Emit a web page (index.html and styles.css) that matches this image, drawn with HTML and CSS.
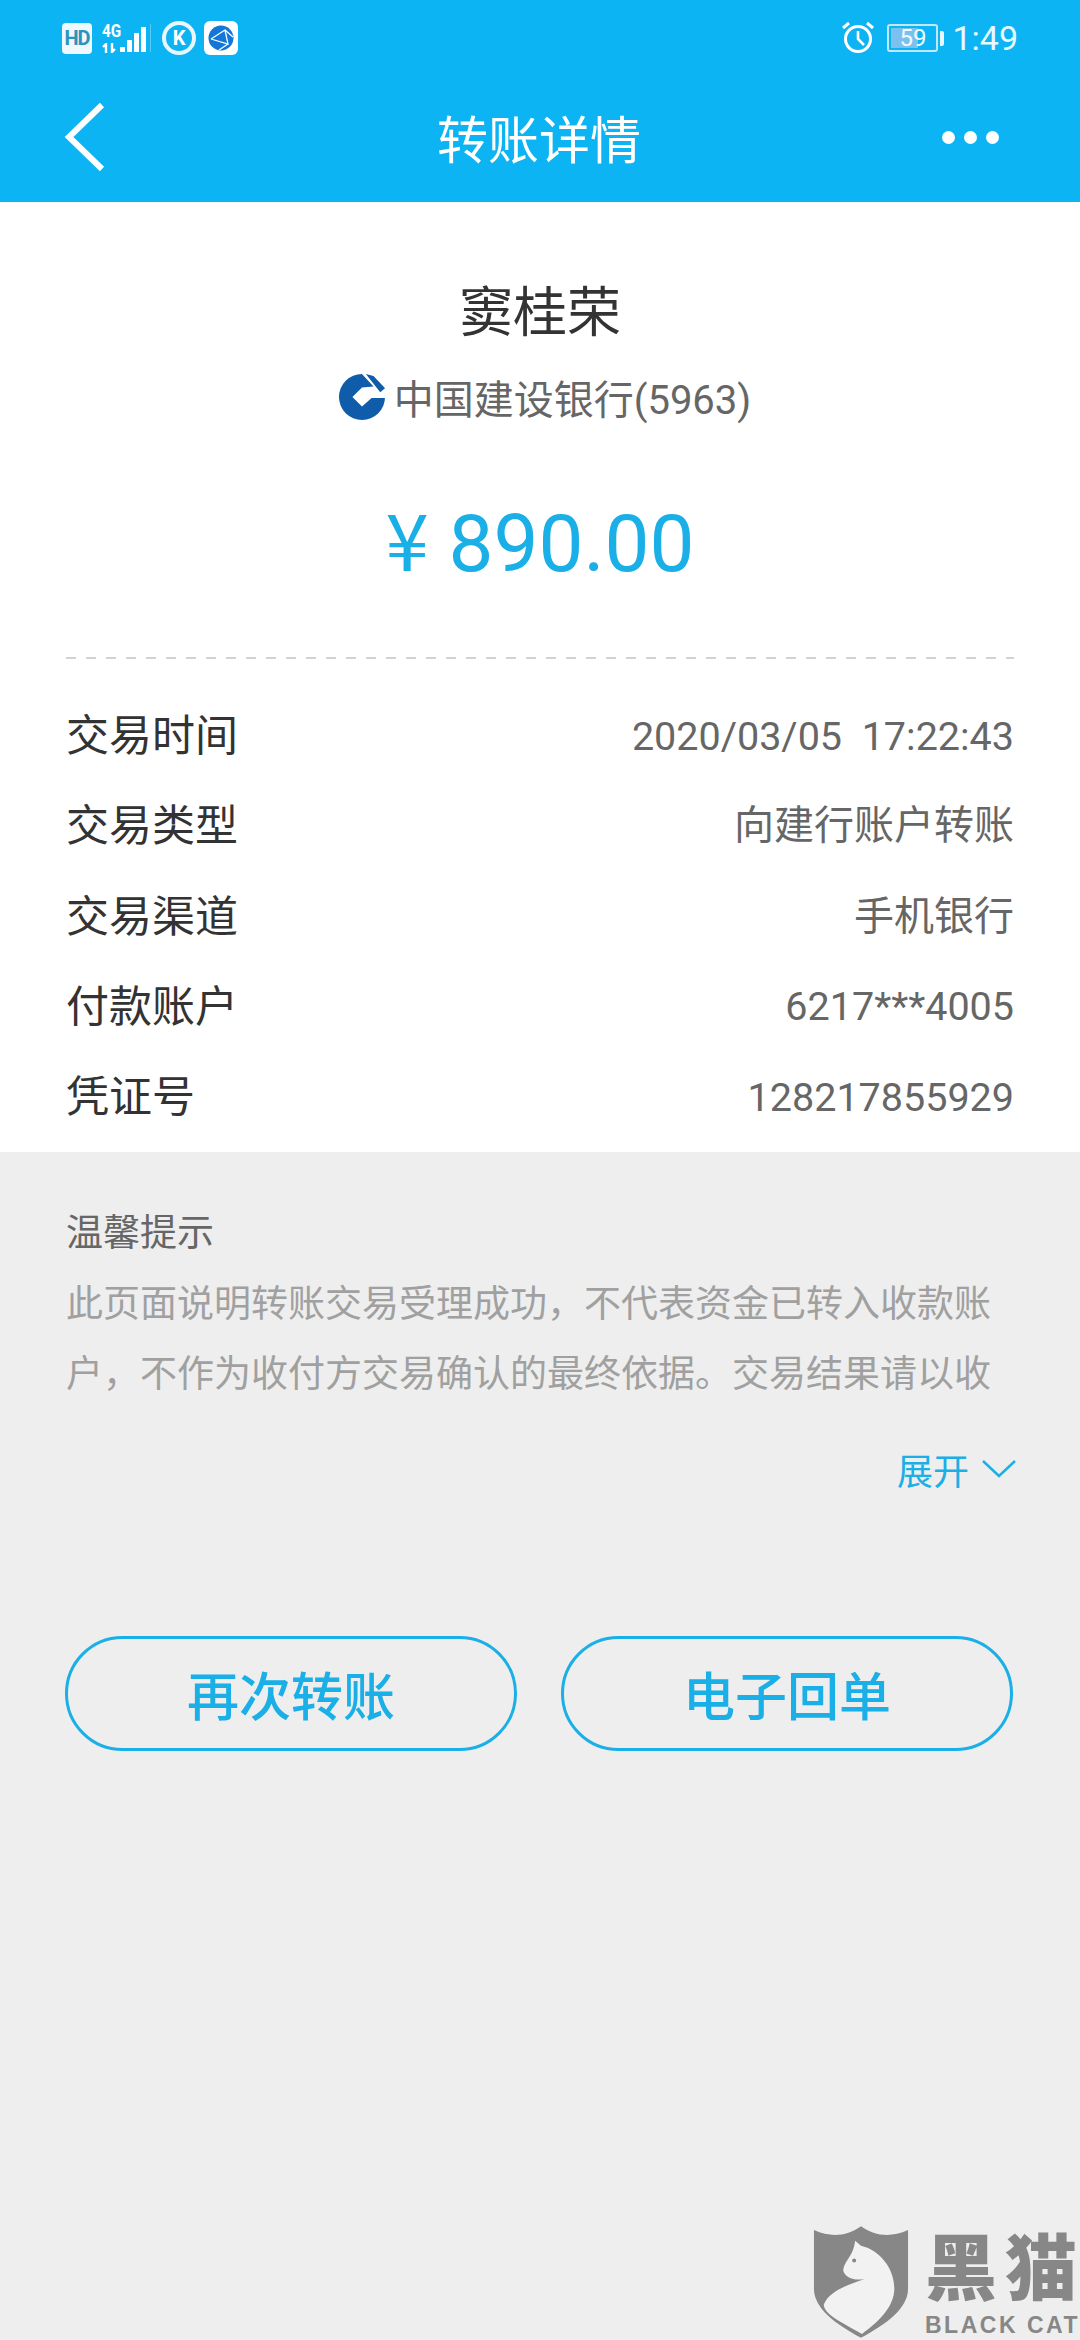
FILE: index.html
```html
<!DOCTYPE html>
<html lang="zh-CN">
<head>
  <meta charset="UTF-8" />
  <meta name="viewport" content="width=device-width, initial-scale=1.0"/>
  <title>转账详情</title>
  <link rel="stylesheet" href="styles.css">
</head>
<body>

  <header class="top">
    <div class="status">
      <div class="status-left">
        <span class="hd">HD</span>
        <div class="net">
          <span class="net-label">4G</span>
          <svg class="net-arrows" width="18" height="10" viewBox="0 0 18 10">
            <path d="M4 10V1L1 4M10 0v9l3-3" fill="none" stroke="#fff" stroke-width="2.400"/>
          </svg>
        </div>
        <div class="bars">
          <i class="b1"></i><i class="b2"></i><i class="b3"></i><i class="b4"></i>
        </div>
        <span class="k-icon">K</span>
        <span class="app-icon">
          <svg width="26" height="26" viewBox="0 0 26 26">
            <circle cx="13" cy="13" r="12.500" fill="#1277d8"/>
            <path d="M3 14L17 5L20 19L3 14M17 5L25 12M20 19L11 25" fill="none" stroke="#fff" stroke-width="1.300"/>
          </svg>
        </span>
      </div>
      <div class="status-right">
        <svg width="36" height="34" viewBox="0 0 36 34">
          <circle cx="18" cy="19" r="12.500" fill="none" stroke="#fff" stroke-width="3"/>
          <path d="M18 11v8l6 6" fill="none" stroke="#fff" stroke-width="2.600"/>
          <path d="M3 8l6-5M33 8l-6-5" fill="none" stroke="#fff" stroke-width="3"/>
        </svg>
        <div class="battery">
          <div class="battery-body"><span class="battery-fill"></span><span class="battery-num">59</span></div>
          <span class="battery-tip"></span>
        </div>
        <span class="clock">1:49</span>
      </div>
    </div>
    <nav class="nav">
      <svg class="back" width="44" height="72" viewBox="0 0 44 72">
        <path d="M38 4L5 36L38 68" fill="none" stroke="#fff" stroke-width="6"/>
      </svg>
      <h1>转账详情</h1>
      <div class="more"><i></i><i></i><i></i></div>
    </nav>
  </header>

  <section class="card">
    <div class="payee">窦桂荣</div>
    <div class="bank">
      <svg width="48" height="48" viewBox="0 0 50 50">
        <circle cx="25" cy="25" r="24" fill="#0f5cab"/>
        <path d="M25 15L15 25L25 35L35 26H52V0H24L37 14Z" fill="#fff"/>
        <path d="M29 1L37 3L49 16L44 20Z" fill="#0f5cab"/>
      </svg>
      <span>中国建设银行(5963)</span>
    </div>
    <div class="amount"><span class="yen">¥</span> 890.00</div>
    <div class="dash"></div>
    <div class="rows">
      <div class="row"><span>交易时间</span><b class="num">2020/03/05&nbsp; 17:22:43</b></div>
      <div class="row"><span>交易类型</span><b>向建行账户转账</b></div>
      <div class="row"><span>交易渠道</span><b>手机银行</b></div>
      <div class="row"><span>付款账户</span><b class="num">6217***4005</b></div>
      <div class="row"><span>凭证号</span><b class="num">128217855929</b></div>
    </div>
  </section>

  <section class="tips">
    <h2>温馨提示</h2>
    <p>此页面说明转账交易受理成功，不代表资金已转入收款账<br>户，不作为收付方交易确认的最终依据。交易结果请以收</p>
    <div class="expand">
      <span>展开</span>
      <svg width="36" height="20" viewBox="0 0 36 20">
        <path d="M2 2L18 17L34 2" fill="none" stroke="#1aafe6" stroke-width="2.400"/>
      </svg>
    </div>
  </section>

  <div class="actions">
    <button class="pill">再次转账</button>
    <button class="pill">电子回单</button>
  </div>

  <!-- watermark -->
  <div class="mark">
    <svg width="98" height="114" viewBox="0 0 100 114">
      <path d="M2 4C20 12 36 10 50 0C64 10 80 12 98 4V64C98 84 76 100 50 114C24 100 2 84 2 64Z" fill="#878787"/>
      <path d="M44 15L50 20C68 24 84 42 84 64C84 82 68 98 51 110C30 98 12 90 12 80C18 66 36 60 54 54C42 56 34 52 32 46C32 36 42 32 44 15Z" fill="#f2f2f2"/>
      <circle cx="43" cy="35" r="2" fill="#878787"/>
    </svg>
    <div class="mark-text">
      <div class="mark-cn"><span>黑</span><span>猫</span></div>
      <span class="mark-en">BLACK CAT</span>
    </div>
  </div>

</body>
</html>
```

FILE: styles.css
```css
/* Reset and Base */
* {
  box-sizing: border-box;
  margin: 0;
  padding: 0;
}

body {
  font-family: Roboto, "Noto Sans CJK SC", sans-serif;
  background: #eeeeee;
  width: 1080px;
  height: 2340px;
  position: relative;
  overflow: hidden;
}

/* Status bar and title */
.top {
  background: #0db4f4;
  height: 202px;
  color: #fff;
}

.status {
  display: flex;
  justify-content: space-between;
  align-items: center;
  height: 76px;
  padding: 0 62px;
}

.status-left, .status-right {
  display: flex;
  align-items: center;
}

.hd {
  width: 30px;
  height: 31px;
  border-radius: 4px;
  background: #eef9fe;
  color: #2b93bd;
  font-size: 20px;
  font-weight: 700;
  line-height: 31px;
  text-align: center;
  letter-spacing: -1px;
}

.net {
  display: flex;
  flex-direction: column;
  align-items: flex-start;
  margin-left: 10px;
  width: 18px;
}

.net-label {
  font-size: 18px;
  font-weight: 700;
  line-height: 16px;
  transform: scaleX(0.85);
  transform-origin: left;
}

.net-arrows {
  margin-top: 4px;
}

.bars {
  display: flex;
  align-items: flex-end;
  gap: 2px;
  height: 28px;
  padding-right: 4px;
  border-right: 1px solid rgba(255,255,255,0.3);
}

.bars i {
  display: block;
  width: 5px;
  background: #fff;
}

.b1 { height: 5px; }
.b2 { height: 12px; }
.b3 { height: 19px; }
.b4 { height: 25px; }

.k-icon {
  width: 34px;
  height: 34px;
  margin-left: 11px;
  border: 4px solid #e8f7fe;
  border-radius: 50%;
  font-size: 20px;
  font-weight: 700;
  line-height: 26px;
  text-align: center;
}

.app-icon {
  display: flex;
  align-items: center;
  justify-content: center;
  width: 34px;
  height: 34px;
  margin-left: 8px;
  background: #fff;
  border-radius: 6px;
}

.status-right svg {
  margin-top: -2px;
}

.battery {
  display: flex;
  align-items: center;
  margin-left: 11px;
}

.battery-body {
  position: relative;
  width: 51px;
  height: 28px;
  border: 2px solid #bfe9fb;
  border-radius: 3px;
  font-size: 24px;
  line-height: 24px;
  text-align: center;
  color: #f0fbff;
}

.battery-fill {
  position: absolute;
  left: 2px;
  top: 2px;
  bottom: 2px;
  width: 27px;
  background: #7cc0ee;
}

.battery-num {
  position: relative;
}

.battery-tip {
  width: 4px;
  height: 15px;
  margin-left: 2px;
  background: #e8f7fe;
  border-radius: 0 2px 2px 0;
}

.clock {
  margin-left: 8px;
  font-size: 34px;
  line-height: 40px;
  color: #e8f9ff;
}

.nav {
  display: flex;
  justify-content: space-between;
  align-items: center;
  height: 126px;
  padding: 0 80px 4px 64px;
}

.nav h1 {
  font-size: 51px;
  font-weight: 400;
}

.back {
  display: block;
  margin-right: 28px;
}

.more {
  display: flex;
  gap: 9px;
  width: 58px;
}

.more i {
  display: block;
  width: 13px;
  height: 13px;
  border-radius: 50%;
  background: #fff;
}

/* White details card */
.card {
  background: #fff;
  height: 950px;
  padding: 0 66px;
}

.payee {
  padding-top: 77px;
  font-size: 54px;
  line-height: 70px;
  text-align: center;
  color: #333;
}

.bank {
  display: flex;
  justify-content: center;
  align-items: center;
  gap: 8px;
  margin-top: 23px;
  padding-left: 9px;
  height: 50px;
  font-size: 40px;
  color: #666;
}

.amount {
  margin-top: 60px;
  font-size: 80px;
  line-height: 110px;
  text-align: center;
  color: #1aafe6;
}

.yen {
  font-family: "Noto Sans CJK SC", sans-serif;
  font-size: 78px;
}

.dash {
  height: 2px;
  margin-top: 58px;
  background: repeating-linear-gradient(90deg, #d2d2d2 0 10px, transparent 10px 20px);
}

.rows {
  padding-top: 28px;
}

.row {
  display: flex;
  justify-content: space-between;
  align-items: center;
  height: 90.250px;
}

.row span {
  color: #333;
  font-size: 43px;
}

.row b {
  font-weight: 400;
  font-size: 40px;
  color: #666;
}

.row .num {
  padding-top: 8px;
  font-size: 39.500px;
}

/* Reminder text */
.tips {
  padding: 59px 66px 0;
}

.tips h2 {
  font-size: 37px;
  font-weight: 400;
  line-height: 46px;
  color: #666;
}

.tips p {
  margin-top: 13px;
  font-size: 37px;
  line-height: 70px;
  color: #a0a0a0;
  white-space: nowrap;
}

.expand {
  display: flex;
  justify-content: flex-end;
  align-items: center;
  gap: 12px;
  margin-top: 37px;
  margin-right: -3px;
  height: 44px;
  font-size: 36px;
  color: #1aafe6;
}

/* Buttons */
.actions {
  display: flex;
  gap: 44px;
  margin-top: 145px;
  padding: 0 65px;
}

.pill {
  width: 452px;
  height: 115px;
  border: 3px solid #1aafe6;
  border-radius: 58px;
  background: transparent;
  color: #1aafe6;
  font-family: inherit;
  font-size: 52px;
  font-weight: 500;
}

/* Black Cat watermark */
.mark {
  position: absolute;
  left: 812px;
  top: 2225px;
  display: flex;
  gap: 15px;
}

.mark svg {
  flex: none;
}

.mark-text {
  display: flex;
  flex-direction: column;
  padding-top: 9px;
  color: #878787;
  white-space: nowrap;
}

.mark-cn {
  display: flex;
  gap: 8px;
  font-size: 72px;
  font-weight: 900;
  line-height: 72px;
}

.mark-en {
  margin-top: 7px;
  font-family: "Liberation Sans", sans-serif;
  font-size: 23px;
  font-weight: 700;
  line-height: 24px;
  letter-spacing: 2.500px;
}
```
